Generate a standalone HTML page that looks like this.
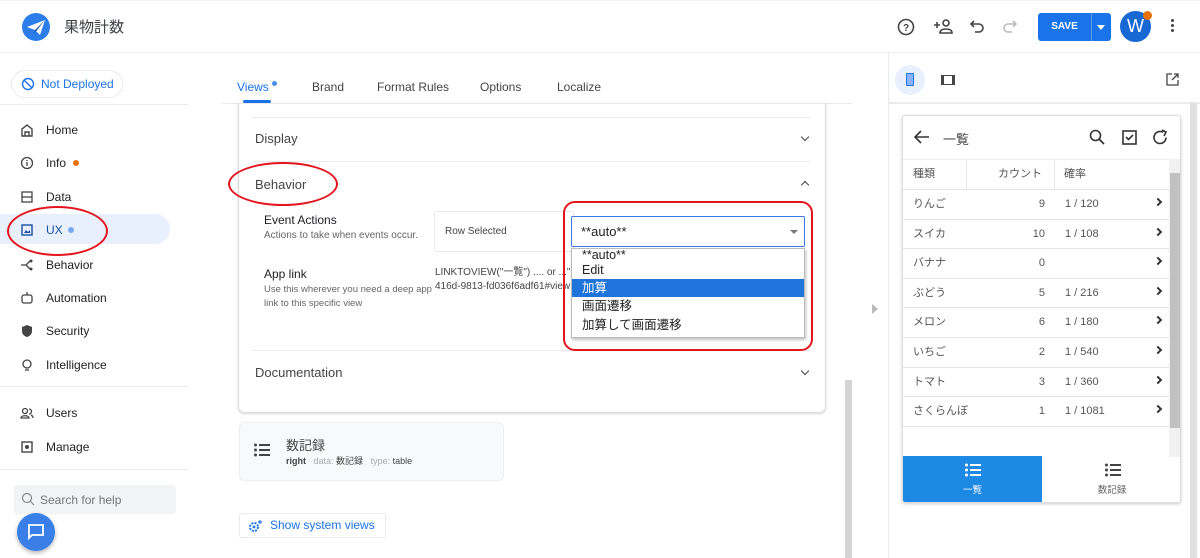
<!DOCTYPE html>
<html><head><meta charset="utf-8"><style>
*{box-sizing:border-box;margin:0;padding:0}
body{width:1200px;height:558px;overflow:hidden;background:#fff;font-family:"Liberation Sans","Noto Sans CJK JP",sans-serif;color:#3c4043;position:relative}
.a{position:absolute}
.hl{position:absolute;height:1px;background:#e8eaed}
.nav{position:absolute;left:46px;font-size:12px;color:#202124}
.ic{position:absolute;left:20px;width:14px;height:14px}
.t{font-size:13px;color:#444}
.row{position:absolute;left:0;width:266px;height:29.6px;border-bottom:1px solid #e6e6e6;font-size:11px;color:#555}
.row span{position:absolute;top:0;line-height:28px}
.row b{position:absolute;right:8px;top:9px;width:6px;height:6px;border-right:2px solid #333;border-top:2px solid #333;transform:rotate(45deg)}
</style></head><body>
<!-- header -->
<div class="hl" style="top:0;left:0;width:1200px;background:#f1f3f4"></div>
<svg class="a" style="left:21px;top:12px" width="30" height="30" viewBox="0 0 30 30"><circle cx="15" cy="15" r="14" fill="#2b7de9"/><path d="M6 15 L24 8 L19 23 L14 18 Z" fill="#fff"/><path d="M14 18 L13 22 L24 8 Z" fill="#1a56b0"/></svg>
<div class="a" style="left:64px;top:16px;font-size:15px;color:#3c4043">果物計数</div>
<div class="hl" style="top:52px;left:0;width:1200px;background:#eceef0"></div>
<svg class="a" style="left:897px;top:18px" width="18" height="18" viewBox="0 0 18 18"><circle cx="9" cy="9" r="7.5" fill="none" stroke="#444" stroke-width="1.6"/><text x="9" y="13" font-size="10" text-anchor="middle" fill="#444" font-weight="bold">?</text></svg>
<svg class="a" style="left:933px;top:17px" width="20" height="18" viewBox="0 0 20 18"><path d="M1 8h6M4 5v6" stroke="#444" stroke-width="1.6"/><circle cx="13" cy="6" r="3" fill="none" stroke="#444" stroke-width="1.6"/><path d="M7 16c0-3 3-4 6-4s6 1 6 4z" fill="none" stroke="#444" stroke-width="1.6"/></svg>
<svg class="a" style="left:970px;top:18px" width="16" height="16" viewBox="0 0 16 16"><path d="M4 3L1 6l3 3M1 6h8a4 4 0 010 8H5" fill="none" stroke="#444" stroke-width="1.6"/></svg>
<svg class="a" style="left:1001px;top:18px" width="16" height="16" viewBox="0 0 16 16"><path d="M12 3l3 3-3 3M15 6H7a4 4 0 000 8h4" fill="none" stroke="#bbb" stroke-width="1.6"/></svg>
<div class="a" style="left:1038px;top:13px;width:73px;height:28px;background:#1a73e8;border-radius:3px"></div>
<div class="a" style="left:1038px;top:13px;width:53px;height:28px;line-height:28px;text-align:center;color:#fff;font-size:10px;font-weight:bold">SAVE</div>
<div class="a" style="left:1091px;top:13px;width:1px;height:28px;background:#5b9bf0"></div>
<div class="a" style="left:1097px;top:25px;border:4px solid transparent;border-top:5px solid #fff"></div>
<div class="a" style="left:1120px;top:11px;width:31px;height:31px;border-radius:50%;background:#1967d2;color:#fff;font-size:18px;text-align:center;line-height:31px">W</div>
<div class="a" style="left:1143px;top:11px;width:9px;height:9px;border-radius:50%;background:#e8710a"></div>
<div class="a" style="left:1171px;top:19px;width:3px;height:3px;background:#444;border-radius:50%;box-shadow:0 5px 0 #444,0 10px 0 #444"></div>

<!-- sidebar -->
<div class="a" style="left:11px;top:70px;width:112px;height:28px;border:1px solid #e8eaed;border-radius:14px"></div>
<svg class="a" style="left:21px;top:77px" width="14" height="14" viewBox="0 0 14 14"><circle cx="7" cy="7" r="5.5" fill="none" stroke="#1a73e8" stroke-width="1.4"/><path d="M3 3l8 8" stroke="#1a73e8" stroke-width="1.4"/></svg>
<div class="a" style="left:41px;top:77px;font-size:12px;color:#1a73e8">Not Deployed</div>
<div class="hl" style="top:104px;left:0;width:188px"></div>
<svg class="ic" style="top:123px" viewBox="0 0 14 14"><path d="M2 13V6l5-4 5 4v7zM5 13V9h4v4" fill="none" stroke="#444" stroke-width="1.4"/></svg>
<div class="nav" style="top:123px">Home</div>
<svg class="ic" style="top:156px" viewBox="0 0 14 14"><circle cx="7" cy="7" r="5.5" fill="none" stroke="#444" stroke-width="1.3"/><path d="M7 6v4M7 4v1" stroke="#444" stroke-width="1.3"/></svg>
<div class="nav" style="top:156px">Info</div><div class="a" style="left:73px;top:160px;width:6px;height:6px;border-radius:50%;background:#e8710a"></div>
<svg class="ic" style="top:190px" viewBox="0 0 14 14"><rect x="2" y="2" width="10" height="10" fill="none" stroke="#444" stroke-width="1.3"/><path d="M2 7h10" stroke="#444" stroke-width="1.3"/></svg>
<div class="nav" style="top:190px">Data</div>
<div class="a" style="left:0;top:214px;width:170px;height:30px;background:#e8f0fe;border-radius:0 15px 15px 0"></div>
<svg class="ic" style="top:223px" viewBox="0 0 14 14"><rect x="2" y="2" width="10" height="10" fill="none" stroke="#1a4fa0" stroke-width="1.4"/><path d="M4 10l2-3 2 2 2-2v3z" fill="#1a4fa0"/></svg>
<div class="nav" style="top:223px;color:#1a4fa0">UX</div><div class="a" style="left:68px;top:227px;width:6px;height:6px;border-radius:50%;background:#7aa7f0"></div>
<svg class="ic" style="top:258px" viewBox="0 0 14 14"><path d="M1 7h5l4-4M6 7l4 4" fill="none" stroke="#444" stroke-width="1.3"/><circle cx="11" cy="3" r="1.5" fill="#444"/><circle cx="11" cy="11" r="1.5" fill="#444"/></svg>
<div class="nav" style="top:258px">Behavior</div>
<svg class="ic" style="top:291px" viewBox="0 0 14 14"><rect x="2" y="4" width="10" height="8" rx="2" fill="none" stroke="#444" stroke-width="1.3"/><path d="M7 1v3" stroke="#444" stroke-width="1.3"/></svg>
<div class="nav" style="top:291px">Automation</div>
<svg class="ic" style="top:324px" viewBox="0 0 14 14"><path d="M7 1l5 2v4c0 3-2 5-5 6-3-1-5-3-5-6V3z" fill="#444"/></svg>
<div class="nav" style="top:324px">Security</div>
<svg class="ic" style="top:358px" viewBox="0 0 14 14"><circle cx="7" cy="6" r="4" fill="none" stroke="#444" stroke-width="1.3"/><path d="M5 12h4" stroke="#444" stroke-width="1.3"/></svg>
<div class="nav" style="top:358px">Intelligence</div>
<div class="hl" style="top:386px;left:0;width:188px"></div>
<svg class="ic" style="top:406px" viewBox="0 0 14 14"><circle cx="5" cy="5" r="2.5" fill="none" stroke="#444" stroke-width="1.3"/><path d="M1 12c0-3 8-3 8 0zM9 3a2.5 2.5 0 010 5M11 9c2 1 2 2 2 3" fill="none" stroke="#444" stroke-width="1.3"/></svg>
<div class="nav" style="top:406px">Users</div>
<svg class="ic" style="top:440px" viewBox="0 0 14 14"><rect x="2" y="2" width="10" height="10" fill="none" stroke="#444" stroke-width="1.4"/><circle cx="7" cy="7" r="2" fill="#444"/></svg>
<div class="nav" style="top:440px">Manage</div>
<div class="hl" style="top:469px;left:0;width:188px"></div>
<div class="a" style="left:14px;top:485px;width:162px;height:29px;background:#f1f3f4;border-radius:3px"></div>
<svg class="a" style="left:21px;top:492px" width="14" height="14" viewBox="0 0 14 14"><circle cx="6" cy="6" r="4.5" fill="none" stroke="#888" stroke-width="1.2"/><path d="M9 9l4 4" stroke="#888" stroke-width="1.2"/></svg>
<div class="a" style="left:40px;top:493px;font-size:12px;color:#777">Search for help</div>
<div class="a" style="left:17px;top:513px;width:38px;height:38px;border-radius:50%;background:#3a7fe8;box-shadow:0 2px 4px rgba(0,0,0,.3)"></div>
<svg class="a" style="left:27px;top:523px" width="18" height="18" viewBox="0 0 18 18"><path d="M2 2h14v10H5l-3 3z" fill="none" stroke="#fff" stroke-width="1.8"/></svg>

<!-- tabs -->
<div class="a" style="left:237px;top:80px;font-size:12px;color:#1a73e8">Views</div>
<div class="a" style="left:272px;top:81px;width:5px;height:5px;border-radius:50%;background:#4a8ef0"></div>
<div class="a" style="left:243px;top:100px;width:28px;height:3px;background:#1a73e8;border-radius:2px"></div>
<div class="a t" style="left:312px;top:80px;font-size:12px">Brand</div>
<div class="a t" style="left:377px;top:80px;font-size:12px">Format Rules</div>
<div class="a t" style="left:480px;top:80px;font-size:12px">Options</div>
<div class="a t" style="left:557px;top:80px;font-size:12px">Localize</div>
<div class="hl" style="top:103px;left:222px;width:630px"></div>

<!-- card -->
<div class="a" style="left:238px;top:103px;width:588px;height:310px;border:1px solid #dadce0;border-top:none;border-radius:0 0 6px 6px;box-shadow:0 1px 2px rgba(0,0,0,.15)"></div>
<div class="hl" style="top:117px;left:252px;width:558px"></div>
<div class="a t" style="left:255px;top:131px">Display</div>
<div class="a" style="left:802px;top:134px;width:6px;height:6px;border-right:1.5px solid #444;border-bottom:1.5px solid #444;transform:rotate(45deg)"></div>
<div class="hl" style="top:161px;left:252px;width:558px"></div>
<div class="a t" style="left:255px;top:177px">Behavior</div>
<div class="a" style="left:802px;top:182px;width:6px;height:6px;border-left:1.5px solid #444;border-top:1.5px solid #444;transform:rotate(45deg)"></div>
<div class="a" style="left:264px;top:213px;font-size:12px;color:#202124">Event Actions</div>
<div class="a" style="left:264px;top:230px;font-size:10px;color:#666">Actions to take when events occur.</div>
<div class="a" style="left:264px;top:267px;font-size:12px;color:#202124">App link</div>
<div class="a" style="left:264px;top:283px;font-size:9.5px;color:#666;line-height:14px;width:175px">Use this wherever you need a deep app link to this specific view</div>
<div class="a" style="left:434px;top:211px;width:140px;height:41px;border:1px solid #e8eaed;border-radius:3px"></div>
<div class="a" style="left:445px;top:226px;font-size:10px;color:#444">Row Selected</div>
<div class="a" style="left:435px;top:266px;font-size:10px;color:#444;line-height:14px">LINKTOVIEW("一覧") .... or ..."h<br>416d-9813-fd036f6adf61#view</div>
<div class="hl" style="top:350px;left:252px;width:558px"></div>
<div class="a t" style="left:255px;top:365px">Documentation</div>
<div class="a" style="left:802px;top:368px;width:6px;height:6px;border-right:1.5px solid #444;border-bottom:1.5px solid #444;transform:rotate(45deg)"></div>
<!-- dropdown -->
<div class="a" style="left:571px;top:216px;width:234px;height:31px;border:1px solid #3b78e7;border-radius:2px;background:#fff"></div>
<div class="a" style="left:581px;top:224px;font-size:13px;color:#222">**auto**</div>
<div class="a" style="left:790px;top:230px;border:4px solid transparent;border-top:4px solid #777"></div>
<div class="a" style="left:571px;top:248px;width:234px;height:90px;border:1px solid #bbb;background:#fff;box-shadow:1px 2px 3px rgba(0,0,0,.25)"></div>
<div class="a" style="left:572px;top:279px;width:232px;height:18px;background:#1e74da"></div>
<div class="a" style="left:582px;top:248px;font-size:12.5px;color:#222;line-height:15px">
<div style="height:15px">**auto**</div><div style="height:16px">Edit</div><div style="height:18px;line-height:18px;color:#fff">加算</div><div style="height:18px;line-height:18px">画面遷移</div><div style="height:20px;line-height:20px">加算して画面遷移</div></div>
<div class="a" style="left:563px;top:201px;width:250px;height:150px;border:2.5px solid #e3161e;border-radius:12px"></div>
<!-- ellipses -->
<div class="a" style="left:228px;top:162px;width:110px;height:44px;border:2.5px solid #e3161e;border-radius:50%"></div>
<div class="a" style="left:7px;top:206px;width:101px;height:50px;border:2.5px solid #e3161e;border-radius:50%"></div>

<!-- second view -->
<div class="a" style="left:239px;top:422px;width:265px;height:59px;background:#f8f9fa;border:1px solid #eceef0;border-radius:5px"></div>
<svg class="a" style="left:254px;top:443px" width="16" height="14" viewBox="0 0 16 14"><g fill="#444"><circle cx="1.5" cy="2" r="1.5"/><circle cx="1.5" cy="7" r="1.5"/><circle cx="1.5" cy="12" r="1.5"/><rect x="5" y="1" width="11" height="2"/><rect x="5" y="6" width="11" height="2"/><rect x="5" y="11" width="11" height="2"/></g></svg>
<div class="a" style="left:286px;top:435px;font-size:13px;color:#444">数記録</div>
<div class="a" style="left:286px;top:454px;font-size:9px;color:#444"><b>right</b> &nbsp;&nbsp;<span style="color:#aaa">data:</span> 数記録 &nbsp;&nbsp;<span style="color:#aaa">type:</span> table</div>
<div class="a" style="left:239px;top:513px;width:147px;height:25px;border:1px solid #e8eaed;border-radius:3px"></div>
<svg class="a" style="left:248px;top:519px" width="15" height="15" viewBox="0 0 15 15"><circle cx="6" cy="8" r="4" fill="none" stroke="#1a73e8" stroke-width="2" stroke-dasharray="2 1.2"/><circle cx="6" cy="8" r="1.4" fill="#1a73e8"/><path d="M12 1v4M10 3h4" stroke="#1a73e8" stroke-width="1.2"/></svg>
<div class="a" style="left:270px;top:518px;font-size:12px;color:#1a73e8">Show system views</div>
<div class="a" style="left:845px;top:380px;width:7px;height:178px;background:#d4d4d4"></div>

<!-- right panel -->
<div class="a" style="left:888px;top:53px;width:1px;height:505px;background:#e8eaed"></div>
<svg class="a" style="left:871px;top:304px" width="8" height="10" viewBox="0 0 8 10"><path d="M1 0l6 5-6 5z" fill="#bbb"/></svg>
<div class="a" style="left:895px;top:65px;width:30px;height:30px;border-radius:50%;background:#e8f0fe"></div>
<div class="a" style="left:906px;top:73px;width:8px;height:13px;border:1.5px solid #1a73e8;border-radius:1px;background:#8ab4f8"></div>
<div class="a" style="left:941px;top:75px;width:14px;height:10px;border:1.5px solid #444;border-left-width:3px;border-right-width:3px"></div>
<svg class="a" style="left:1166px;top:73px" width="13" height="13" viewBox="0 0 13 13"><path d="M6 1H1v11h11V7M8 1h4v4M12 1L6 7" fill="none" stroke="#444" stroke-width="1.3"/></svg>
<div class="hl" style="top:102px;left:889px;width:311px;background:#ebebeb;height:2px"></div>
<div class="a" style="left:1190px;top:103px;width:7px;height:455px;background:#e0e0e0"></div>
<!-- phone -->
<div class="a" style="left:902px;top:115px;width:279px;height:388px;border:1px solid #ddd;border-radius:3px;box-shadow:0 1px 3px rgba(0,0,0,.2);overflow:hidden;background:#fff">
 <svg class="a" style="left:11px;top:14px" width="16" height="14" viewBox="0 0 16 14"><path d="M7 1L1 7l6 6M1 7h14" fill="none" stroke="#333" stroke-width="1.6"/></svg>
 <div class="a" style="left:40px;top:13px;font-size:13px;color:#444">一覧</div>
 <svg class="a" style="left:186px;top:13px" width="16" height="16" viewBox="0 0 16 16"><circle cx="6.5" cy="6.5" r="5" fill="none" stroke="#333" stroke-width="1.6"/><path d="M10 10l5 5" stroke="#333" stroke-width="1.8"/></svg>
 <svg class="a" style="left:219px;top:14px" width="15" height="15" viewBox="0 0 15 15"><rect x="1" y="1" width="13" height="13" fill="none" stroke="#333" stroke-width="1.6"/><path d="M4 7l2.5 2.5L11 5" fill="none" stroke="#333" stroke-width="1.6"/></svg>
 <svg class="a" style="left:249px;top:13px" width="17" height="17" viewBox="0 0 17 17"><path d="M14 8.5A6 6 0 1 1 11 3.3" fill="none" stroke="#333" stroke-width="1.6"/><path d="M10 1l4 2-2 4" fill="none" stroke="#333" stroke-width="1.6"/></svg>
 <div class="a" style="left:0;top:43px;width:266px;height:31px;border-top:1px solid #eee;border-bottom:1px solid #e6e6e6;font-size:11px;color:#555">
  <span class="a" style="left:10px;top:0;line-height:28px">種類</span><div class="a" style="left:63px;top:0;width:1px;height:30px;background:#e6e6e6"></div>
  <span class="a" style="left:95px;top:0;line-height:28px">カウント</span><div class="a" style="left:151px;top:0;width:1px;height:30px;background:#e6e6e6"></div>
  <span class="a" style="left:161px;top:0;line-height:28px">確率</span></div>
 <div class="a" style="left:0;top:74px;width:266px">
  <div class="row" style="top:0"><span style="left:10px">りんご</span><span style="right:124px">9</span><span style="left:162px">1 / 120</span><b></b></div>
  <div class="row" style="top:29.6px"><span style="left:10px">スイカ</span><span style="right:124px">10</span><span style="left:162px">1 / 108</span><b></b></div>
  <div class="row" style="top:59.2px"><span style="left:10px">バナナ</span><span style="right:124px">0</span><b></b></div>
  <div class="row" style="top:88.8px"><span style="left:10px">ぶどう</span><span style="right:124px">5</span><span style="left:162px">1 / 216</span><b></b></div>
  <div class="row" style="top:118.4px"><span style="left:10px">メロン</span><span style="right:124px">6</span><span style="left:162px">1 / 180</span><b></b></div>
  <div class="row" style="top:148px"><span style="left:10px">いちご</span><span style="right:124px">2</span><span style="left:162px">1 / 540</span><b></b></div>
  <div class="row" style="top:177.6px"><span style="left:10px">トマト</span><span style="right:124px">3</span><span style="left:162px">1 / 360</span><b></b></div>
  <div class="row" style="top:207.2px"><span style="left:10px">さくらんぼ</span><span style="right:124px">1</span><span style="left:162px">1 / 1081</span><b></b></div>
 </div>
 <div class="a" style="left:266px;top:43px;width:12px;height:298px;background:#f1f1f1"></div>
 <div class="a" style="left:267px;top:57px;width:10px;height:255px;background:#c1c1c1"></div>
 <div class="a" style="left:0;top:340px;width:139px;height:48px;background:#1e88e5"></div>
 <svg class="a" style="left:62px;top:347px" width="16" height="14" viewBox="0 0 16 14"><g fill="#fff"><circle cx="1.5" cy="2" r="1.5"/><circle cx="1.5" cy="7" r="1.5"/><circle cx="1.5" cy="12" r="1.5"/><rect x="5" y="1" width="11" height="2"/><rect x="5" y="6" width="11" height="2"/><rect x="5" y="11" width="11" height="2"/></g></svg>
 <div class="a" style="left:0;top:366px;width:139px;text-align:center;font-size:9.5px;color:#fff">一覧</div>
 <svg class="a" style="left:202px;top:347px" width="16" height="14" viewBox="0 0 16 14"><g fill="#444"><circle cx="1.5" cy="2" r="1.5"/><circle cx="1.5" cy="7" r="1.5"/><circle cx="1.5" cy="12" r="1.5"/><rect x="5" y="1" width="11" height="2"/><rect x="5" y="6" width="11" height="2"/><rect x="5" y="11" width="11" height="2"/></g></svg>
 <div class="a" style="left:139px;top:366px;width:140px;text-align:center;font-size:9.5px;color:#666">数記録</div>
</div>
</body></html>
